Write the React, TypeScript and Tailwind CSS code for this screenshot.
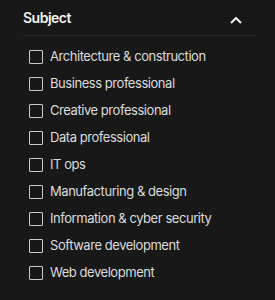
import { useState } from 'react';

const SUBJECTS = [
  'Architecture & construction',
  'Business professional',
  'Creative professional',
  'Data professional',
  'IT ops',
  'Manufacturing & design',
  'Information & cyber security',
  'Software development',
  'Web development',
];

export default function App() {
  const [checked, setChecked] = useState<Record<string, boolean>>({});

  return (
    <div
      className="min-h-screen w-full bg-[#181818] pl-[23px] pr-[19px] pt-[4px]"
      style={{ fontFamily: 'Inter, "Liberation Sans", sans-serif' }}
    >
      {/* Header */}
      <div className="flex h-[27px] items-center justify-between">
        <h2 className="text-[14px] font-semibold tracking-[-0.5px] text-[#f2f2f2] leading-none">Subject</h2>
        <svg width="12" height="7" viewBox="0 0 12 7" className="mr-[14px] mt-[5px]">
          <path d="M1 6 L6 1 L11 6" fill="none" stroke="#f2f2f2" strokeWidth="2" />
        </svg>
      </div>
      <div className="mt-[4px] h-px bg-[#2c2c2c]" />

      {/* Options */}
      <ul className="pt-[7px]">
        {SUBJECTS.map((s) => (
          <li key={s}>
            <label className="flex h-[27px] cursor-pointer items-center gap-[7px] pl-[6px]">
              <span
                onClick={() => setChecked((c) => ({ ...c, [s]: !c[s] }))}
                className="h-[14px] w-[14px] shrink-0 rounded-[1px] border-[1.5px] border-[#cbcbcb]"
              />
              <span className="text-[13px] tracking-[-0.45px] text-[#dcdcdc] leading-none">{s}</span>
            </label>
          </li>
        ))}
      </ul>
    </div>
  );
}
